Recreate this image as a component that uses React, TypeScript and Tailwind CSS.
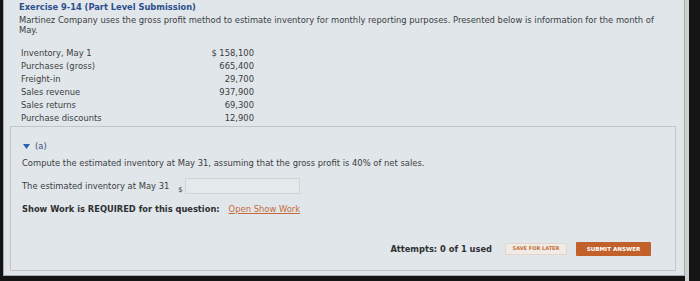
const rows: [string, string][] = [
  ['Inventory, May 1', '$ 158,100'],
  ['Purchases (gross)', '665,400'],
  ['Freight-in', '29,700'],
  ['Sales revenue', '937,900'],
  ['Sales returns', '69,300'],
  ['Purchase discounts', '12,900'],
];

export default function App() {
  return (
    <div className="flex w-[700px] h-[281px] bg-[#141414] overflow-hidden font-['DejaVu_Sans',sans-serif] text-[8.4px] text-[#3b3d3f]">
      {/* screen panel */}
      <div className="flex flex-col w-[682px] h-[276px] bg-[#e0e6e9] border-l border-r border-b border-[#a9adae] ml-[3px]">
        <div className="pl-[15px] pr-[20px] pt-[2px]">
          <h1 className="font-bold text-[#2d4f8e] leading-[11px] text-[8.3px]">Exercise 9-14 (Part Level Submission)</h1>
          <p className="mt-[2px] leading-[10px]">
            Martinez Company uses the gross profit method to estimate inventory for monthly reporting purposes. Presented below is information for the month of May.
          </p>
          <div className="mt-[12px] pl-[2px] w-[235px]">
            {rows.map(([label, value]) => (
              <div key={label} className="flex justify-between h-[13px] items-center">
                <span>{label}</span>
                <span>{value}</span>
              </div>
            ))}
          </div>
        </div>

        {/* part (a) */}
        <div className="mt-[1px] ml-[6px] mr-[8px] flex-1 mb-[4px] border border-[#c2c6c7] pl-[11px] pt-[14px] flex flex-col">
          <div className="flex items-center gap-[5px] leading-[10px]">
            <svg width="7" height="5" viewBox="0 0 7 5" className="ml-[1px]">
              <path d="M0 0 H7 L3.5 5 Z" fill="#2d5fb4" />
            </svg>
            <span className="text-[#3c4f82]">(a)</span>
          </div>
          <p className="mt-[7px] leading-[10px]">
            Compute the estimated inventory at May 31, assuming that the gross profit is 40% of net sales.
          </p>
          <div className="mt-[12px] flex items-start leading-[10px]">
            <span className="mt-[1px]">The estimated inventory at May 31</span>
            <span className="ml-[9px] mt-[5px] text-[7px]">$</span>
            <div className="ml-[2px] mt-[-2px] w-[115px] h-[16px] border border-[#d2d4d3] bg-[#e4e9eb]" />
          </div>
          <div className="mt-[9px] flex items-center leading-[10px]">
            <span className="font-bold text-[#2f3133] text-[8.3px]">Show Work is REQUIRED for this question:</span>
            <a className="ml-[9px] text-[#c46a3a] underline">Open Show Work</a>
          </div>
          <div className="mt-[28px] flex items-center justify-end pr-[24px]">
            <span className="font-bold text-[#2f3133] text-[8.3px]">Attempts: 0 of 1 used</span>
            <button className="ml-[13px] w-[62px] h-[12px] bg-[#f1ebe5] border border-[#e6d6c9] text-[#c4703c] text-[5px] font-bold flex items-center justify-center">
              SAVE FOR LATER
            </button>
            <button className="ml-[9px] w-[75px] h-[14px] bg-[#c2612a] rounded-[1px] text-white text-[5.6px] font-bold flex items-center justify-center">
              SUBMIT ANSWER
            </button>
          </div>
        </div>
      </div>
      <div className="w-[4px] h-full bg-[#cfd1cf]" />
    </div>
  );
}
